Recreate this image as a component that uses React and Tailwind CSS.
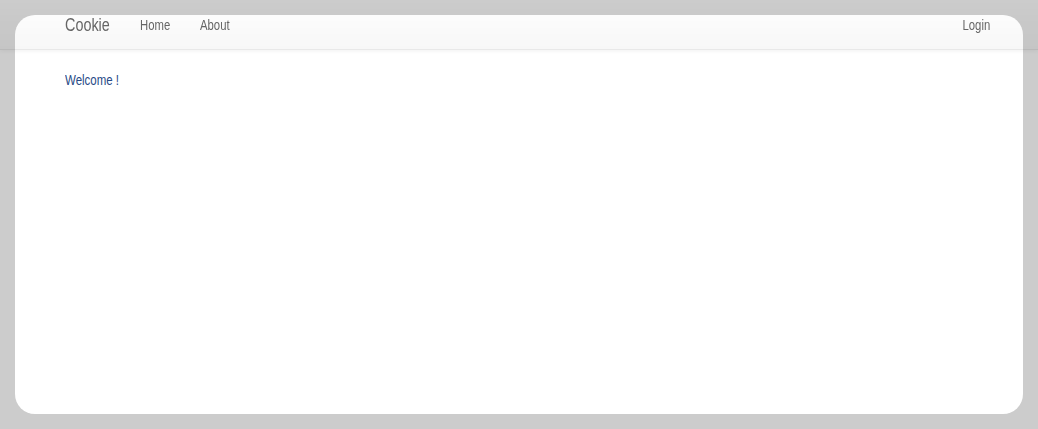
export default function App() {
  return (
    <div className="min-h-screen bg-[#cccccc] p-[15px] font-['Liberation_Sans',Arial,sans-serif]">
      <nav className="fixed top-0 left-0 right-0 z-10 h-[50px] bg-gradient-to-b from-[rgba(255,255,255,0)] to-[rgba(0,0,0,0.03)] border-b border-[rgba(0,0,0,0.09)] shadow-[0_1px_4px_rgba(0,0,0,0.06)]">
        <div className="flex items-center h-[50px] pl-[65px] pr-[48px]">
          <a className="w-[75px] text-[18px] text-[#666] leading-none">
            <span className="inline-block origin-left scale-x-[0.8]">Cookie</span>
          </a>
          <a className="w-[60px] text-[14px] text-[#666]">
            <span className="inline-block origin-left scale-x-[0.81]">Home</span>
          </a>
          <a className="text-[14px] text-[#666]">
            <span className="inline-block origin-left scale-x-[0.81]">About</span>
          </a>
          <a className="ml-auto text-[14px] text-[#666]">
            <span className="inline-block origin-right scale-x-[0.81]">Login</span>
          </a>
        </div>
      </nav>
      <div className="bg-white rounded-[20px] h-[399px] pt-[55px] px-[50px]">
        <p className="text-[14px] text-[#284a86]">
          <span className="inline-block origin-left scale-x-[0.82]">Welcome !</span>
        </p>
      </div>
    </div>
  );
}
